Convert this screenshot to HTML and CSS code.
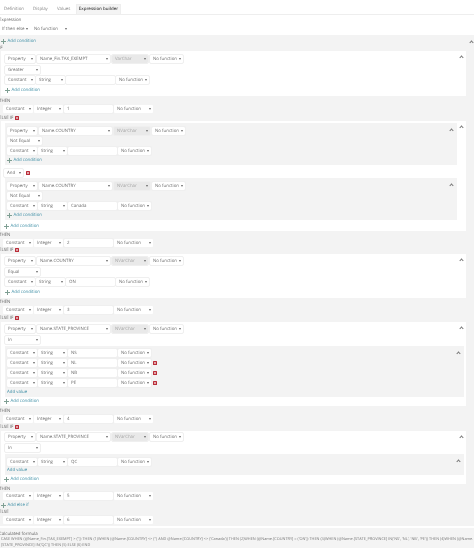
FILE: index.html
```html
<!DOCTYPE html>
<html lang="en">
<head>
<meta charset="utf-8">
<title>Expression builder</title>
<link rel="stylesheet" href="styles.css">
</head>
<body>
<svg class="defs" width="0" height="0" aria-hidden="true"><symbol id="x" viewBox="0 0 8 8"><rect width="8" height="8" rx="1" fill="#b92c38"/><path d="M2 2l4 4M6 2L2 6" stroke="#f6e3e3" stroke-width="1.3"/></symbol></svg>
<nav class="tabs">
  <a class="tab t1">Definition</a><a class="tab t2">Display</a><a class="tab t3">Values</a><a class="tab active">Expression builder</a>
</nav>
<div class="lbl top">Expression</div>
<div class="row first"><div class="s w31">If then else</div><div class="s w38">No function</div></div>

<main class="panel">
  <span class="up up-panel"></span>
  <div class="add a0"><i class="plus"></i>Add condition</div>
  <div class="lbl">IF</div>
  <section class="box">
    <span class="up"></span>
    <div class="inner pt4">
      <div class="row"><div class="s w30">Property</div><div class="s w73">Name_Fin.TAX_EXEMPT</div><div class="s w36 off">VarChar</div><div class="s w33">No function</div></div>
      <div class="row m3"><div class="s w35">Greater</div></div>
      <div class="row m2 tight"><div class="s w30">Constant</div><div class="s w29">String</div><div class="i"></div><div class="s w33">No function</div></div>
      <div class="add m2"><i class="plus"></i>Add condition</div>
    </div>
  </section>
  <div class="lbl m2">THEN</div>
  <div class="row m1 then"><div class="s w30">Constant</div><div class="s w29">Integer</div><div class="i">1</div><div class="s w39">No function</div></div>
  <div class="lbl m2">ELSE IF <svg class="del"><use href="#x"/></svg></div>

  <section class="box multi">
    <span class="up"></span>
    <div class="nest">
      <span class="up up-n"></span>
      <div class="row"><div class="s w30">Property</div><div class="s w73">Name.COUNTRY</div><div class="s w36 off">NVarChar</div><div class="s w33">No function</div></div>
      <div class="row m2"><div class="s w35">Not Equal</div></div>
      <div class="row m2 tight"><div class="s w30">Constant</div><div class="s w29">String</div><div class="i"></div><div class="s w33">No function</div></div>
      <div class="add m1"><i class="plus"></i>Add condition</div>
    </div>
    <div class="row and"><div class="s w19">And</div><svg class="del"><use href="#x"/></svg></div>
    <div class="nest m1">
      <span class="up up-n"></span>
      <div class="row"><div class="s w30">Property</div><div class="s w73">Name.COUNTRY</div><div class="s w36 off">NVarChar</div><div class="s w33">No function</div></div>
      <div class="row m2"><div class="s w35">Not Equal</div></div>
      <div class="row m2 tight"><div class="s w30">Constant</div><div class="s w29">String</div><div class="i">Canada</div><div class="s w33">No function</div></div>
      <div class="add m1"><i class="plus"></i>Add condition</div>
    </div>
    <div class="add m2 outer"><i class="plus"></i>Add condition</div>
  </section>
  <div class="lbl m1">THEN</div>
  <div class="row m1 then"><div class="s w30">Constant</div><div class="s w29">Integer</div><div class="i">2</div><div class="s w39">No function</div></div>
  <div class="lbl">ELSE IF <svg class="del"><use href="#x"/></svg></div>

  <section class="box m1">
    <span class="up"></span>
    <div class="inner pt3">
      <div class="row"><div class="s w30">Property</div><div class="s w73">Name.COUNTRY</div><div class="s w36 off">NVarChar</div><div class="s w33">No function</div></div>
      <div class="row m3"><div class="s w35">Equal</div></div>
      <div class="row m2 tight"><div class="s w30">Constant</div><div class="s w29">String</div><div class="i">ON</div><div class="s w33">No function</div></div>
      <div class="add m2"><i class="plus"></i>Add condition</div>
    </div>
  </section>
  <div class="lbl m1">THEN</div>
  <div class="row m1 then"><div class="s w30">Constant</div><div class="s w29">Integer</div><div class="i">3</div><div class="s w39">No function</div></div>
  <div class="lbl m1">ELSE IF <svg class="del"><use href="#x"/></svg></div>

  <section class="box m1 low">
    <span class="up"></span>
    <div class="inner pt3">
      <div class="row"><div class="s w30">Property</div><div class="s w73">Name.STATE_PROVINCE</div><div class="s w36 off">NVarChar</div><div class="s w33">No function</div></div>
      <div class="row m3"><div class="s w35">In</div></div>
    </div>
    <div class="list m2 pt3">
      <span class="up up-n"></span>
      <div class="row tight"><div class="s w30">Constant</div><div class="s w29">String</div><div class="i">NS</div><div class="s w33">No function</div></div>
      <div class="row m2 tight"><div class="s w30">Constant</div><div class="s w29">String</div><div class="i">NL</div><div class="s w33">No function</div><svg class="del"><use href="#x"/></svg></div>
      <div class="row m2 tight"><div class="s w30">Constant</div><div class="s w29">String</div><div class="i">NB</div><div class="s w33">No function</div><svg class="del"><use href="#x"/></svg></div>
      <div class="row m2 tight"><div class="s w30">Constant</div><div class="s w29">String</div><div class="i">PE</div><div class="s w33">No function</div><svg class="del"><use href="#x"/></svg></div>
      <div class="add m1 value">Add value</div>
    </div>
    <div class="add outer"><i class="plus"></i>Add condition</div>
  </section>
  <div class="lbl m2">THEN</div>
  <div class="row m1 then"><div class="s w30">Constant</div><div class="s w29">Integer</div><div class="i">4</div><div class="s w39">No function</div></div>
  <div class="lbl m1">ELSE IF <svg class="del"><use href="#x"/></svg></div>

  <section class="box m1 low">
    <span class="up"></span>
    <div class="inner pt2">
      <div class="row"><div class="s w30">Property</div><div class="s w73">Name.STATE_PROVINCE</div><div class="s w36 off">NVarChar</div><div class="s w33">No function</div></div>
      <div class="row m3"><div class="s w35">In</div></div>
    </div>
    <div class="list m2 pt4">
      <span class="up up-n"></span>
      <div class="row tight"><div class="s w30">Constant</div><div class="s w29">String</div><div class="i">QC</div><div class="s w33">No function</div></div>
      <div class="add value">Add value</div>
    </div>
    <div class="add outer"><i class="plus"></i>Add condition</div>
  </section>
  <div class="lbl m2">THEN</div>
  <div class="row then"><div class="s w30">Constant</div><div class="s w29">Integer</div><div class="i">5</div><div class="s w39">No function</div></div>
  <div class="add m1 a0"><i class="plus"></i>Add else if</div>
  <div class="lbl">ELSE</div>
  <div class="row m1 then"><div class="s w30">Constant</div><div class="s w29">Integer</div><div class="i">6</div><div class="s w39">No function</div></div>
</main>

<footer class="formula">
  <div class="lbl">Calculated formula</div>
  <p class="text">CASE WHEN (@Name_Fin.[TAX_EXEMPT] &gt; ('')) THEN (1)WHEN (@Name.[COUNTRY] &lt;&gt; ('') AND @Name.[COUNTRY] &lt;&gt; ('Canada')) THEN (2)WHEN (@Name.[COUNTRY] = ('ON')) THEN (3)WHEN (@Name.[STATE_PROVINCE] IN('NS', 'NL', 'NB', 'PE')) THEN (4)WHEN (@Name.<br>[STATE_PROVINCE] IN('QC')) THEN (5) ELSE (6) END</p>
</footer>
</body>
</html>
```
FILE: styles.css
```css
* { box-sizing: border-box; }
html, body { margin: 0; padding: 0; background: #fff; }
body {
  width: 474px;
  height: 551px;
  overflow: hidden;
  font: 4.4px/6px "Open Sans", sans-serif;
  text-rendering: geometricPrecision;
  color: #666;
  filter: blur(0.35px);
}
.defs { position: absolute; }
.tabs {
  display: flex;
  height: 15px;
  padding: 4px 0 0 4px;
  border-bottom: 1px solid #eee;
}
.tab { line-height: 10px; color: #888; white-space: nowrap; }
.t1 { width: 29px; }
.t2 { width: 24px; }
.t3 { width: 19px; }
.active {
  width: 45px;
  text-align: center;
  background: #f4f4f4;
  color: #444;
  font-weight: 600;
  border: 1px solid #eee;
  border-bottom: 0;
  line-height: 9px;
}
.lbl {
  height: 6px;
  line-height: 6px;
  text-indent: -1px;
  white-space: nowrap;
}
.top { margin-top: 2px; }
.row { display: flex; height: 8px; gap: 2px; align-items: center; }
.row.first { margin: 2px 0 2px -1px; gap: 1px; }
.row.tight { gap: 1px; }
.row.then { gap: 1px; padding-left: 3px; }
.s, .i {
  height: 8px;
  line-height: 8px;
  background: #fff;
  border-radius: 1px;
  padding-left: 3px;
  white-space: nowrap;
  overflow: hidden;
  position: relative;
  flex: none;
  color: #6d6d6d;
}
.s::after {
  content: "";
  position: absolute;
  right: 2px;
  top: 3px;
  border: 1.5px solid transparent;
  border-top: 2px solid #666;
  border-bottom: 0;
}
.i { width: 49px; outline: 0.5px solid #efefef; outline-offset: -0.5px; }
.box .s, .box .i, .nest .s, .list .s { outline: 0.5px solid #efefef; outline-offset: -0.5px; }
.off { background: #e9e9e9; color: #a5a5a5; }
.w19 { width: 19px; }
.w29 { width: 29px; }
.w30 { width: 30px; }
.w31 { width: 31px; }
.w33 { width: 33px; }
.w35 { width: 35px; }
.w36 { width: 36px; }
.w38 { width: 38px; }
.w39 { width: 39px; }
.w73 { width: 73px; }
.panel {
  position: relative;
  height: 491px;
  background: #f3f3f3;
  padding-top: 2px;
}
.box {
  position: relative;
  background: #fff;
  margin: 0 8px 0 1px;
}
.inner { padding: 0 0 2px 4px; }
.multi { padding: 2px 0 1px 0; }
.low { padding-bottom: 1px; }
.low .inner { padding-bottom: 0; }
.nest {
  position: relative;
  background: #f3f3f3;
  margin: 0 9px 0 4px;
  padding: 4px 0 1px 2px;
}
.list {
  position: relative;
  background: #f3f3f3;
  margin-left: 4px;
  margin-right: 2px;
  padding: 0 0 1px 2px;
}
.and { margin: 4px 0 0 3px; }
.pt2 { padding-top: 2px; }
.pt3 { padding-top: 3px; }
.pt4 { padding-top: 4px; }
.m1 { margin-top: 1px; }
.m2 { margin-top: 2px; }
.m3 { margin-top: 3px; }
.box.m1 { margin-top: 1px; }
.nest.m1 { margin-top: 1px; }
.list.m2 { margin-top: 2px; }
.add {
  height: 8px;
  line-height: 8px;
  color: #3f8fa6;
  white-space: nowrap;
  display: flex;
  align-items: center;
  gap: 1.5px;
}
.a0 { padding-left: 1px; }
.outer { padding-left: 3px; }
.value { padding-left: 0; }
.plus {
  width: 5px;
  height: 5px;
  flex: none;
  background:
    linear-gradient(#7f9f93, #7f9f93) center / 5px 1px no-repeat,
    linear-gradient(#7f9f93, #7f9f93) center / 1px 5px no-repeat;
}
.del {
  display: inline-block;
  width: 4px;
  height: 4px;
  flex: none;
  vertical-align: -0.5px;
  margin-left: 1px;
}
.up {
  position: absolute;
  top: 5px;
  right: 3px;
  width: 3px;
  height: 3px;
  border-top: 1px solid #777;
  border-left: 1px solid #777;
  transform: rotate(45deg);
}
.up-panel { top: 6px; right: 1.5px; }
.up-n { top: 6px; right: 4.5px; }
.formula {
  margin-top: 2px;
  height: 20px;
  background: #f4f4f4;
  padding-top: 3px;
}
.text {
  margin: 0;
  font-size: 3.85px;
  line-height: 5.5px;
  color: #777;
  padding-left: 1px;
}
```
